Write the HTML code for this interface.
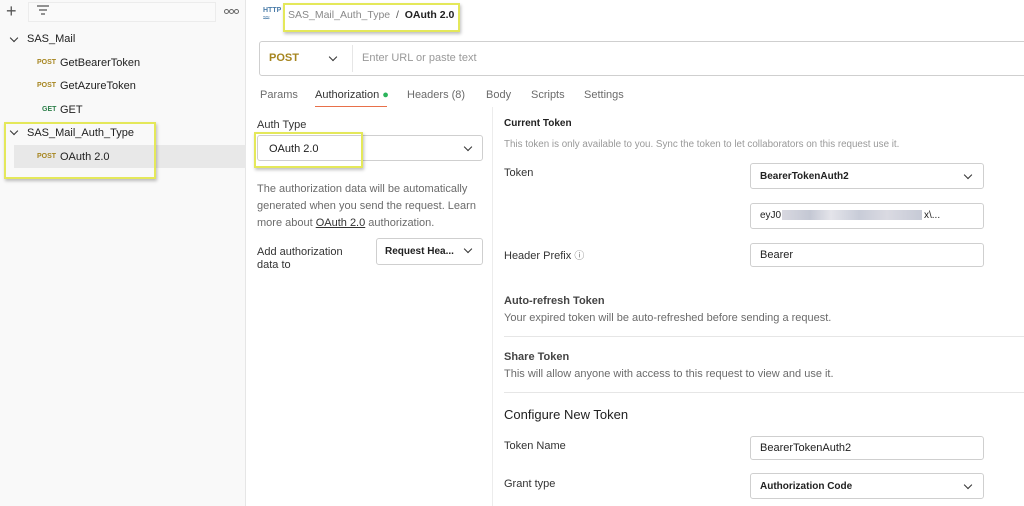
<!DOCTYPE html><html><head><style>
*{box-sizing:border-box;margin:0;padding:0}
body{width:1024px;height:506px;overflow:hidden;background:#fff;font-family:"Liberation Sans",sans-serif;color:#212121;position:relative;font-size:11px}
.a{position:absolute;white-space:nowrap}
.g{color:#6b6b6b}
.hl{position:absolute;border:2px solid #e4e85a;box-shadow:1px 2px 3px rgba(0,0,0,.25)}
.box{position:absolute;border:1px solid #cfcfcf;border-radius:3px;background:#fff}
.chev{position:absolute;width:6px;height:6px;border-right:1.3px solid #333;border-bottom:1.3px solid #333;transform:rotate(45deg)}
.m{font-size:7px;font-weight:bold;color:#a6851f}
.dot{position:absolute;width:5px;height:5px;border:1px solid #666;border-radius:50%}
</style></head><body>
<div class="a" style="left:0;top:0;width:246px;height:506px;background:#f9f9f9;border-right:1px solid #e6e6e6"></div>
<div class="a" style="left:6px;top:0;font-size:18px;color:#555;line-height:22px">+</div>
<div class="a" style="left:28px;top:2px;width:188px;height:20px;border:1px solid #ececec;background:#fafafa"></div>
<svg class="a" style="left:37px;top:5px" width="12" height="10"><path d="M0 1h12M2 5h8M4 9h4" stroke="#555" stroke-width="1.2"/></svg>
<div class="dot" style="left:224px;top:9px"></div><div class="dot" style="left:229px;top:9px"></div><div class="dot" style="left:234px;top:9px"></div>
<div class="chev" style="left:11px;top:35px"></div>
<div class="a" style="left:27px;top:33px;font-size:11px">SAS_Mail</div>
<div class="a m" style="left:37px;top:59px">POST</div><div class="a" style="left:60px;top:57px">GetBearerToken</div>
<div class="a m" style="left:37px;top:82px">POST</div><div class="a" style="left:60px;top:80px">GetAzureToken</div>
<div class="a m" style="left:42px;top:106px;color:#2d7f4a">GET</div><div class="a" style="left:60px;top:104px">GET</div>
<div class="chev" style="left:11px;top:128px"></div>
<div class="a" style="left:27px;top:127px">SAS_Mail_Auth_Type</div>
<div class="a" style="left:14px;top:145px;width:232px;height:23px;background:#e8e8e8"></div>
<div class="a m" style="left:37px;top:153px">POST</div><div class="a" style="left:60px;top:151px">OAuth 2.0</div>
<div class="hl" style="left:4px;top:122px;width:152px;height:57px"></div>

<div class="a" style="left:263px;top:7px;font-size:7px;font-weight:bold;color:#4a7ca8;line-height:8px">HTTP<br><span style="letter-spacing:-1px">≈≈</span></div>
<div class="a" style="left:288px;top:9px;font-size:10.5px;color:#888">SAS_Mail_Auth_Type&nbsp; <span style="color:#555">/</span>&nbsp; <b style="color:#212121">OAuth 2.0</b></div>
<div class="hl" style="left:283px;top:3px;width:177px;height:29px"></div>

<div class="box" style="left:259px;top:41px;width:780px;height:35px"></div>
<div class="a" style="left:352px;top:45px;width:1px;height:27px;background:#e6e6e6"></div>
<div class="a" style="left:269px;top:52px;font-weight:bold;color:#a6851f;font-size:11px">POST</div>
<div class="chev" style="left:330px;top:54px"></div>
<div class="a" style="left:362px;top:52px;color:#999">Enter URL or paste text</div>

<div class="a g" style="left:260px;top:89px">Params</div>
<div class="a" style="left:315px;top:89px;color:#333">Authorization <span style="color:#2bb45b">●</span></div>
<div class="a" style="left:315px;top:106px;width:72px;height:1px;background:#e8704a"></div>
<div class="a g" style="left:407px;top:89px">Headers (8)</div>
<div class="a g" style="left:486px;top:89px">Body</div>
<div class="a g" style="left:531px;top:89px">Scripts</div>
<div class="a g" style="left:584px;top:89px">Settings</div>

<div class="a" style="left:257px;top:119px;color:#333">Auth Type</div>
<div class="box" style="left:257px;top:135px;width:226px;height:26px"></div>
<div class="a" style="left:269px;top:143px">OAuth 2.0</div>
<div class="chev" style="left:465px;top:144px"></div>
<div class="hl" style="left:254px;top:132px;width:109px;height:36px"></div>
<div class="a g" style="left:257px;top:181px;line-height:17px;white-space:normal;width:225px">The authorization data will be automatically generated when you send the request. Learn more about <u style="color:#333">OAuth 2.0</u> authorization.</div>
<div class="a" style="left:257px;top:246px;line-height:13px;color:#333">Add authorization<br>data to</div>
<div class="box" style="left:376px;top:238px;width:107px;height:27px"></div>
<div class="a" style="left:385px;top:246px;font-weight:bold;font-size:10px">Request Hea...</div>
<div class="chev" style="left:465px;top:246px"></div>

<div class="a" style="left:492px;top:107px;width:1px;height:399px;background:#ececec"></div>
<div class="a" style="left:504px;top:118px;font-weight:bold;font-size:10px">Current Token</div>
<div class="a" style="left:504px;top:139px;font-size:9.8px;color:#999">This token is only available to you. Sync the token to let collaborators on this request use it.</div>
<div class="a" style="left:504px;top:167px;color:#333">Token</div>
<div class="box" style="left:750px;top:163px;width:234px;height:26px"></div>
<div class="a" style="left:760px;top:171px;font-weight:bold;font-size:10px">BearerTokenAuth2</div>
<div class="chev" style="left:965px;top:172px"></div>
<div class="box" style="left:750px;top:203px;width:234px;height:26px"></div>
<div class="a" style="left:760px;top:210px;font-size:10px">eyJ0</div>
<div class="a" style="left:782px;top:210px;width:140px;height:10px;background:linear-gradient(90deg,#d8d8e0,#c4c8d4 20%,#e4e4ea 35%,#c8ccd8 55%,#dadae2 75%,#c6cad6)"></div>
<div class="a" style="left:924px;top:210px;font-size:10px">x\...</div>
<div class="a" style="left:504px;top:247px;color:#333">Header Prefix <span style="font-size:10px;color:#777">ⓘ</span></div>
<div class="box" style="left:750px;top:243px;width:234px;height:24px"></div>
<div class="a" style="left:760px;top:249px">Bearer</div>
<div class="a" style="left:504px;top:295px;font-weight:bold;color:#444">Auto-refresh Token</div>
<div class="a g" style="left:504px;top:312px">Your expired token will be auto-refreshed before sending a request.</div>
<div class="a" style="left:504px;top:336px;width:520px;height:1px;background:#e6e6e6"></div>
<div class="a" style="left:504px;top:351px;font-weight:bold;color:#444">Share Token</div>
<div class="a g" style="left:504px;top:368px">This will allow anyone with access to this request to view and use it.</div>
<div class="a" style="left:504px;top:392px;width:520px;height:1px;background:#e6e6e6"></div>
<div class="a" style="left:504px;top:407px;font-size:13px;color:#222">Configure New Token</div>
<div class="a" style="left:504px;top:440px;color:#333">Token Name</div>
<div class="box" style="left:750px;top:436px;width:234px;height:24px"></div>
<div class="a" style="left:760px;top:442px">BearerTokenAuth2</div>
<div class="a" style="left:504px;top:478px;color:#333">Grant type</div>
<div class="box" style="left:750px;top:473px;width:234px;height:26px"></div>
<div class="a" style="left:760px;top:481px;font-weight:bold;font-size:10px">Authorization Code</div>
<div class="chev" style="left:965px;top:482px"></div>
</body></html>
